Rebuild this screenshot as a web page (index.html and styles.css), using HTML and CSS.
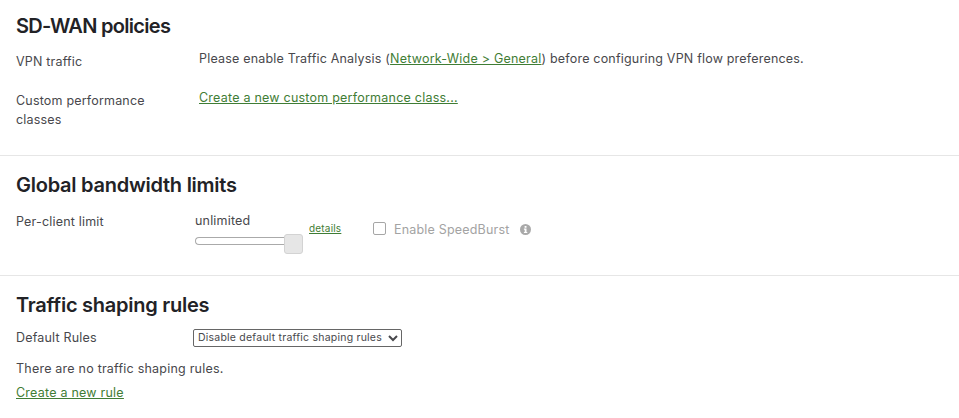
FILE: index.html
```html
<!DOCTYPE html>
<html lang="en">
<head>
<meta charset="UTF-8">
<meta name="viewport" content="width=device-width, initial-scale=1.0">
<title>SD-WAN &amp; traffic shaping</title>
<link rel="stylesheet" href="styles.css">
</head>
<body>

<section class="section section-sdwan">
  <h2>SD-WAN policies</h2>
  <div class="row row-vpn">
    <div class="label">VPN traffic</div>
    <div class="value">Please enable Traffic Analysis (<a href="#">Network-Wide &gt; General</a>) before configuring VPN flow preferences.</div>
  </div>
  <div class="row">
    <div class="label">Custom performance classes</div>
    <div class="value"><a href="#">Create a new custom performance class...</a></div>
  </div>
</section>

<section class="section section-bandwidth">
  <h2>Global bandwidth limits</h2>
  <div class="row">
    <div class="label">Per-client limit</div>
    <div class="limit">
      <div class="limit-text">unlimited</div>
      <div class="slider">
        <div class="slider-track"></div>
        <div class="slider-handle"></div>
      </div>
    </div>
    <a class="details" href="#">details</a>
    <label class="speedburst">
      <input type="checkbox" disabled>
      <span>Enable SpeedBurst</span>
      <svg class="info" width="11" height="11" viewBox="0 0 11 11">
        <circle cx="5.5" cy="5.5" r="5.5" fill="#a9a9a9"/>
        <rect x="4.6" y="2" width="1.9" height="1.8" fill="#fff"/>
        <path d="M3.9 4.6h2.6v3.3h.8v1.1H3.9V7.900h.8V5.700h-.8z" fill="#fff"/>
      </svg>
    </label>
  </div>
</section>

<section class="section section-shaping">
  <h2>Traffic shaping rules</h2>
  <div class="row row-default">
    <div class="label label-narrow">Default Rules</div>
    <select class="rules-select">
      <option>Disable default traffic shaping rules</option>
    </select>
  </div>
  <p class="empty">There are no traffic shaping rules.</p>
  <a href="#">Create a new rule</a>
</section>

</body>
</html>
```

FILE: styles.css
```css
body {
  margin: 0;
  font-family: Inter, "Liberation Sans", sans-serif;
  font-size: 12.5px;
  line-height: 19px;
  letter-spacing: 0.19px;
  color: #48484c;
  background-color: #fff;
  overflow: hidden;
}
h2 {
  margin: 0;
  font-size: 20px;
  line-height: 24px;
  font-weight: 600;
  letter-spacing: -0.25px;
  color: #222226;
}
a {
  color: #3f7d35;
  text-decoration: underline;
  letter-spacing: 0.23px;
}
.section {
  padding: 0 16px;
  border-bottom: 1px solid #e6e6e6;
}
.section-sdwan {
  padding-top: 14px;
  padding-bottom: 26px;
}
.section-bandwidth {
  padding-top: 17px;
  padding-bottom: 21px;
}
.section-shaping {
  padding-top: 17px;
  border-bottom: none;
}
.row {
  display: flex;
  align-items: flex-start;
}
.section-sdwan h2 {
  margin-bottom: 10px;
  letter-spacing: -0.7px;
}
.row-vpn {
  margin-bottom: 17px;
}
.row-vpn .label {
  padding-top: 4px;
}
.row-vpn .value {
  padding-top: 1px;
}
.label {
  width: 183px;
  padding-right: 40px;
  box-sizing: border-box;
  padding-top: 3px;
  flex: none;
}
.value {
  flex: 1;
}
.section-bandwidth h2 {
  margin-bottom: 15px;
}
.section-bandwidth .label {
  width: 179px;
  padding-top: 0;
}
.limit {
  width: 114px;
  flex: none;
}
.limit-text {
  margin-top: -1px;
}
.slider {
  position: relative;
  width: 108px;
  height: 20px;
  margin-top: 4px;
}
.slider-track {
  position: absolute;
  left: 0;
  top: 3px;
  width: 91px;
  height: 8px;
  box-sizing: border-box;
  border: 1px solid #aaa;
  border-right: none;
  border-radius: 4px 0 0 4px;
}
.slider-handle {
  position: absolute;
  right: 0;
  top: 0;
  width: 19px;
  height: 20px;
  box-sizing: border-box;
  background-color: #e6e6e6;
  border: 1px solid #d3d3d3;
  border-radius: 3px;
}
.details {
  font-size: 10px;
  margin-top: 7px;
  width: 64px;
  flex: none;
  letter-spacing: 0.19px;
}
.speedburst {
  display: flex;
  align-items: center;
  gap: 8px;
  color: #a3a3a3;
  margin-top: 8px;
}
.speedburst input {
  appearance: none;
  margin: -3px 0 0;
  width: 13px;
  height: 13px;
  background-color: #fff;
  border: 1px solid #a6a6a6;
  border-radius: 2px;
}
.info {
  margin-left: 2px;
}
.section-shaping h2 {
  margin-bottom: 11px;
}
.row-default {
  align-items: center;
}
.label-narrow {
  width: 177px;
  padding-top: 0;
}
.rules-select {
  width: 209px;
  height: 18px;
  font-family: inherit;
  font-size: 10.5px;
  letter-spacing: 0.22px;
  color: #48484c;
  background-color: #fff;
  border: 1px solid #666;
  border-radius: 2px;
  padding: 0;
}
.empty {
  margin: 12px 0 5px;
  letter-spacing: 0.22px;
}
```
